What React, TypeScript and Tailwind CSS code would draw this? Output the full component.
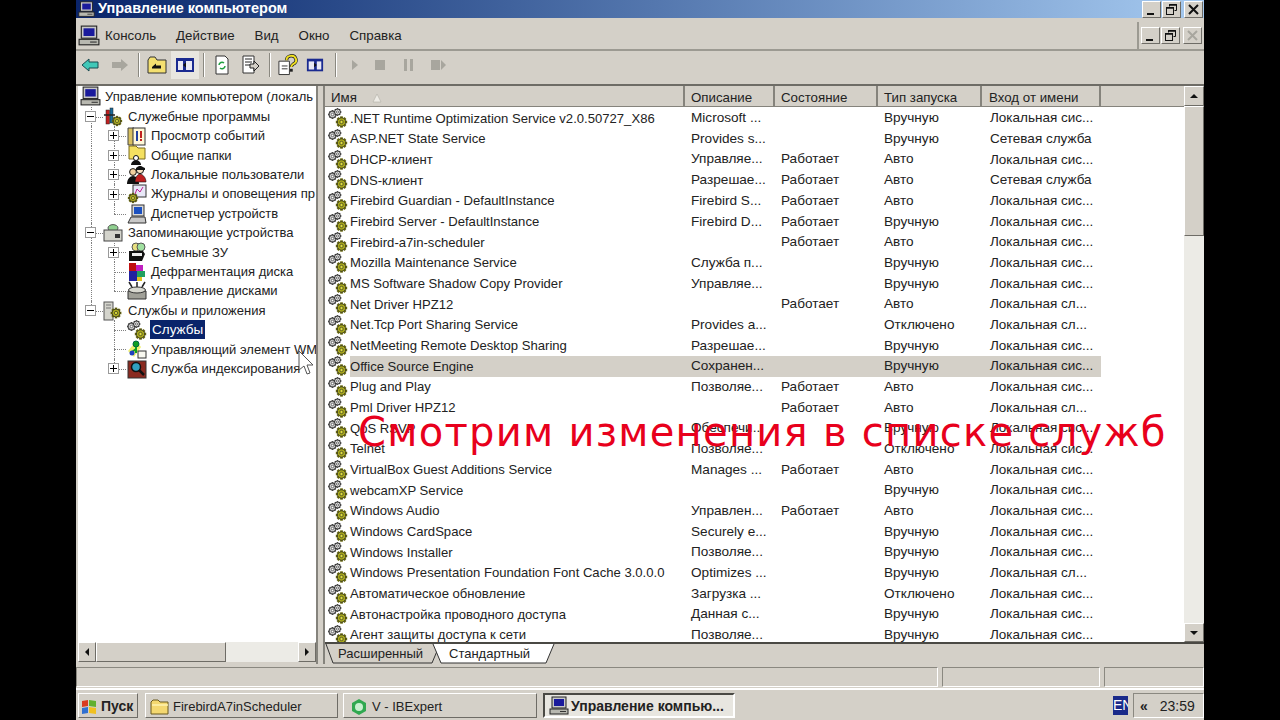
import React from "react";

const rows: [string, string, string, string, string][] = [
  [".NET Runtime Optimization Service v2.0.50727_X86", "Microsoft ...", "", "Вручную", "Локальная сис..."],
  ["ASP.NET State Service", "Provides s...", "", "Вручную", "Сетевая служба"],
  ["DHCP-клиент", "Управляе...", "Работает", "Авто", "Локальная сис..."],
  ["DNS-клиент", "Разрешае...", "Работает", "Авто", "Сетевая служба"],
  ["Firebird Guardian - DefaultInstance", "Firebird S...", "Работает", "Авто", "Локальная сис..."],
  ["Firebird Server - DefaultInstance", "Firebird D...", "Работает", "Вручную", "Локальная сис..."],
  ["Firebird-a7in-scheduler", "", "Работает", "Авто", "Локальная сис..."],
  ["Mozilla Maintenance Service", "Служба п...", "", "Вручную", "Локальная сис..."],
  ["MS Software Shadow Copy Provider", "Управляе...", "", "Вручную", "Локальная сис..."],
  ["Net Driver HPZ12", "", "Работает", "Авто", "Локальная сл..."],
  ["Net.Tcp Port Sharing Service", "Provides a...", "", "Отключено", "Локальная сл..."],
  ["NetMeeting Remote Desktop Sharing", "Разрешае...", "", "Вручную", "Локальная сис..."],
  ["Office Source Engine", "Сохранен...", "", "Вручную", "Локальная сис..."],
  ["Plug and Play", "Позволяе...", "Работает", "Авто", "Локальная сис..."],
  ["Pml Driver HPZ12", "", "Работает", "Авто", "Локальная сл..."],
  ["QoS RSVP", "Обеспечи...", "", "Вручную", "Локальная сис..."],
  ["Telnet", "Позволяе...", "", "Отключено", "Локальная сис..."],
  ["VirtualBox Guest Additions Service", "Manages ...", "Работает", "Авто", "Локальная сис..."],
  ["webcamXP Service", "", "", "Вручную", "Локальная сис..."],
  ["Windows Audio", "Управлен...", "Работает", "Авто", "Локальная сис..."],
  ["Windows CardSpace", "Securely e...", "", "Вручную", "Локальная сис..."],
  ["Windows Installer", "Позволяе...", "", "Вручную", "Локальная сис..."],
  ["Windows Presentation Foundation Font Cache 3.0.0.0", "Optimizes ...", "", "Вручную", "Локальная сл..."],
  ["Автоматическое обновление", "Загрузка ...", "", "Отключено", "Локальная сис..."],
  ["Автонастройка проводного доступа", "Данная с...", "", "Вручную", "Локальная сис..."],
  ["Агент защиты доступа к сети", "Позволяе...", "", "Вручную", "Локальная сис..."],
];

function GearShape({ cx, cy, r, fill, hole = "#fff", tooth = "#222" }: { cx: number; cy: number; r: number; fill: string; hole?: string; tooth?: string }) {
  const teeth = [0, 45, 90, 135];
  return (
    <g>
      {teeth.map((a) => (
        <rect
          key={a}
          x={cx - r * 1.35}
          y={cy - r * 0.32}
          width={r * 2.7}
          height={r * 0.64}
          fill={tooth}
          transform={`rotate(${a} ${cx} ${cy})`}
        />
      ))}
      <circle cx={cx} cy={cy} r={r} fill={fill} stroke="#222" strokeWidth="0.7" />
      <circle cx={cx} cy={cy} r={r * 0.4} fill={hole} stroke="#222" strokeWidth="0.6" />
    </g>
  );
}

const olive = { fill: "#a8a81c", hole: "#e0e040", tooth: "#66660c" };

function Gears({ size = 20 }: { size?: number }) {
  return (
    <svg width={size} height={size} viewBox="0 0 20 20" className="shrink-0">
      <GearShape cx={4.5} cy={6.5} r={3.2} fill="#dcdcdc" />
      <GearShape cx={9.5} cy={4} r={2.8} fill="#ececec" />
      <GearShape cx={13.5} cy={14} r={4.200} {...olive} />
    </svg>
  );
}

function Computer({ size = 20 }: { size?: number }) {
  return (
    <svg width={size} height={size} viewBox="0 0 20 20" className="shrink-0">
      <rect x="3" y="1" width="14" height="11" fill="#c8c8c8" stroke="#222" />
      <rect x="5" y="3" width="10" height="7" fill="#1a1a9c" />
      <rect x="1" y="13" width="18" height="5" fill="#b8b8b0" stroke="#222" />
      <rect x="11" y="15" width="6" height="1" fill="#333" />
    </svg>
  );
}

function Folder({ size = 20 }: { size?: number }) {
  return (
    <svg width={size} height={size} viewBox="0 0 20 20" className="shrink-0">
      <path d="M1 5l2-2h5l2 2h8v12H1z" fill="#f4d870" stroke="#6b5a20" />
      <path d="M2 8h16" stroke="#fff3b0" strokeWidth="1.5" />
    </svg>
  );
}

function TreeIcon({ kind }: { kind: string }) {
  if (kind === "tools")
    return (
      <svg width="20" height="20" viewBox="0 0 20 20" className="shrink-0">
        <rect x="3" y="3" width="3.500" height="14" fill="#c02020" stroke="#222" strokeWidth="0.5" />
        <rect x="7" y="1" width="3" height="15" fill="#1a6a9a" stroke="#222" strokeWidth="0.5" />
        <path d="M1 8h11" stroke="#222" strokeWidth="1.5" />
        <GearShape cx={14} cy={14} r={3.8} {...olive} />
      </svg>
    );
  if (kind === "events")
    return (
      <svg width="20" height="20" viewBox="0 0 20 20" className="shrink-0">
        <path d="M1 2h6v17H1z" fill="#d8c060" stroke="#444" />
        <rect x="6" y="2" width="12" height="17" fill="#fff8d8" stroke="#333" />
        <rect x="13" y="5" width="2" height="7" fill="#c02020" />
        <rect x="9" y="5" width="2" height="10" fill="#2040a0" />
        <rect x="13" y="13" width="2" height="2" fill="#c02020" />
      </svg>
    );
  if (kind === "shared")
    return (
      <svg width="20" height="20" viewBox="0 0 20 20" className="shrink-0">
        <path d="M2 1h7l2 2h7v11H2z" fill="#f4e060" stroke="#7a6a20" />
        <path d="M4 20c0-3 3-5 5-5s5 2 5 5z" fill="#111" />
        <circle cx="9" cy="13" r="2.500" fill="#fff" stroke="#111" />
      </svg>
    );
  if (kind === "users")
    return (
      <svg width="20" height="20" viewBox="0 0 20 20" className="shrink-0">
        <path d="M0 19c0-5 3-8 6-8s6 3 6 8z" fill="#111" />
        <circle cx="6" cy="7" r="3.400" fill="#f0d0a0" stroke="#111" />
        <path d="M8 17c0-5 3-8 5-8s6 3 6 8z" fill="#c02020" stroke="#111" strokeWidth="0.6" />
        <circle cx="13" cy="5" r="3.600" fill="#f6e0c0" stroke="#111" />
        <path d="M9 3l4-2 5 2v2h-9z" fill="#111" />
      </svg>
    );
  if (kind === "logs")
    return (
      <svg width="20" height="20" viewBox="0 0 20 20" className="shrink-0">
        <rect x="6" y="1" width="13" height="12" fill="#e8e8f8" stroke="#333" />
        <path d="M8 10l2-5 3 3 3-5" stroke="#c02090" fill="none" />
        <GearShape cx={6} cy={14} r={3.8} {...olive} />
      </svg>
    );
  if (kind === "device")
    return (
      <svg width="20" height="20" viewBox="0 0 20 20" className="shrink-0">
        <rect x="5" y="1" width="12" height="11" fill="#d8d8d8" stroke="#333" />
        <rect x="7" y="3" width="8" height="7" fill="#1a50c0" />
        <path d="M1 19l3-6h14l1 6z" fill="#c8c8c8" stroke="#333" />
      </svg>
    );
  if (kind === "storage")
    return (
      <svg width="20" height="20" viewBox="0 0 20 20" className="shrink-0">
        <ellipse cx="10" cy="5" rx="5" ry="3.400" fill="#90d090" stroke="#555" />
        <rect x="1" y="7" width="18" height="11" fill="#d4d4cc" stroke="#444" />
        <rect x="12" y="11" width="5" height="4" fill="#333" />
      </svg>
    );
  if (kind === "removable")
    return (
      <svg width="20" height="20" viewBox="0 0 20 20" className="shrink-0">
        <circle cx="9" cy="5" r="4" fill="#e8e080" stroke="#555" />
        <circle cx="14" cy="5" r="4" fill="#a0e0a0" stroke="#555" />
        <path d="M2 9h14l2 3-3 7H2z" fill="#111" />
        <rect x="5" y="11" width="10" height="3" fill="#f0f0f0" />
      </svg>
    );
  if (kind === "defrag")
    return (
      <svg width="20" height="20" viewBox="0 0 20 20" className="shrink-0">
        <path d="M2 1h7v8H2z" fill="#c01010" />
        <path d="M2 9h8v10H2z" fill="#2020a0" />
        <path d="M9 3h7v6H9z" fill="#c020c0" />
        <path d="M10 9h8v6h-8z" fill="#20a060" />
        <path d="M10 15h5v4h-5z" fill="#e0c020" />
      </svg>
    );
  if (kind === "disks")
    return (
      <svg width="20" height="20" viewBox="0 0 20 20" className="shrink-0">
        <path d="M2 1l3 5M10 1v5M18 1l-3 5" stroke="#222" strokeWidth="1.500" />
        <path d="M1 10h18v8H1z" fill="#a0a098" stroke="#333" />
        <ellipse cx="10" cy="9" rx="8.500" ry="3" fill="#d8d8d0" stroke="#333" />
      </svg>
    );
  if (kind === "apps")
    return (
      <svg width="20" height="20" viewBox="0 0 20 20" className="shrink-0">
        <rect x="1" y="1" width="9" height="18" fill="#d4d4cc" stroke="#555" />
        <path d="M3 4h5M3 7h5" stroke="#777" />
        <GearShape cx={13} cy={12} r={4} {...olive} />
      </svg>
    );
  if (kind === "wmi")
    return (
      <svg width="20" height="20" viewBox="0 0 20 20" className="shrink-0">
        <path d="M1 12l8-10 5 6-7 10z" fill="#f0f070" />
        <circle cx="9" cy="5" r="3" fill="#10a020" stroke="#064" />
        <path d="M9 8v6M5 13l4-3" stroke="#10a020" strokeWidth="2" />
        <circle cx="5" cy="14" r="2.500" fill="#2040c0" />
        <rect x="11" y="12" width="8" height="7" fill="#f8f8f0" stroke="#333" />
      </svg>
    );
  if (kind === "index")
    return (
      <svg width="20" height="20" viewBox="0 0 20 20" className="shrink-0">
        <rect x="1" y="2" width="18" height="17" fill="#8a2a20" stroke="#333" />
        <circle cx="9" cy="8" r="4.500" fill="#30a0c0" stroke="#111" strokeWidth="1.500" />
        <path d="M12 11l5 5" stroke="#111" strokeWidth="2.500" />
      </svg>
    );
  if (kind === "gears") return <Gears />;
  return <Computer />;
}

function Expander({ open }: { open: boolean }) {
  return (
    <span className="relative flex h-[11px] w-[11px] shrink-0 items-center justify-center border border-[#9a9a9a] bg-white">
      <span className="absolute h-px w-[7px] bg-black" />
      {!open && <span className="absolute h-[7px] w-px bg-black" />}
    </span>
  );
}

type TreeRow = { label: string; icon: string; level: number; exp?: "open" | "closed"; selected?: boolean; last?: boolean };

const tree: TreeRow[] = [
  { label: "Служебные программы", icon: "tools", level: 1, exp: "open" },
  { label: "Просмотр событий", icon: "events", level: 2, exp: "closed" },
  { label: "Общие папки", icon: "shared", level: 2, exp: "closed" },
  { label: "Локальные пользователи", icon: "users", level: 2, exp: "closed" },
  { label: "Журналы и оповещения пр", icon: "logs", level: 2, exp: "closed" },
  { label: "Диспетчер устройств", icon: "device", level: 2, last: true },
  { label: "Запоминающие устройства", icon: "storage", level: 1, exp: "open" },
  { label: "Съемные ЗУ", icon: "removable", level: 2, exp: "closed" },
  { label: "Дефрагментация диска", icon: "defrag", level: 2 },
  { label: "Управление дисками", icon: "disks", level: 2, last: true },
  { label: "Службы и приложения", icon: "apps", level: 1, exp: "open" },
  { label: "Службы", icon: "gears", level: 2, selected: true },
  { label: "Управляющий элемент WMI", icon: "wmi", level: 2 },
  { label: "Служба индексирования", icon: "index", level: 2, exp: "closed", last: true },
];

const raised = "border border-t-white border-l-white border-r-[#6e6c66] border-b-[#6e6c66]";
const sunken = "border border-t-[#8a8880] border-l-[#8a8880] border-r-white border-b-white";

function WinBtn({ kind, disabled }: { kind: "min" | "max" | "close"; disabled?: boolean }) {
  const c = disabled ? "#a8a69e" : "#111";
  return (
    <div className={`flex h-[17px] w-[19px] items-center justify-center bg-[#d4d0c8] ${raised}`}>
      <svg width="13" height="13" viewBox="0 0 13 13">
        {kind === "min" && <rect x="2" y="10" width="7" height="2" fill={c} />}
        {kind === "max" && (
          <g fill="none" stroke={c}>
            <path d="M4.500 3.500v-2h7v6h-2" />
            <rect x="1.500" y="4.500" width="7" height="7" />
            <path d="M1 5h8M4 2h8" strokeWidth="1.400" />
          </g>
        )}
        {kind === "close" && <path d="M2 2l9 9M11 2l-9 9" stroke={c} strokeWidth="2" />}
      </svg>
    </div>
  );
}

function ToolSep({ className }: { className: string }) {
  return <div className={`h-[24px] w-[2px] shrink-0 border-l border-r border-l-[#8a8880] border-r-white ${className}`} />;
}

function ScrollArrow({ dir }: { dir: "up" | "down" | "left" | "right" }) {
  const d = {
    up: "M2 8l4-4 4 4z",
    down: "M2 4l4 4 4-4z",
    left: "M8 2L4 6l4 4z",
    right: "M4 2l4 4-4 4z",
  }[dir];
  return (
    <svg width="12" height="12" viewBox="0 0 12 12">
      <path d={d} fill="#111" />
    </svg>
  );
}

function ToolbarIcons() {
  return (
    <div className="flex h-[28px] shrink-0 items-center pl-[5px]">
      <svg width="18" height="18" viewBox="0 0 18 18" className="shrink-0">
        <path d="M1 9l7-6v3h9v6H8v3z" fill="#40c8b8" stroke="#1a4a50" />
      </svg>
      <svg width="18" height="18" viewBox="0 0 18 18" className="ml-[12px] shrink-0">
        <path d="M17 9l-7-6v3H1v6h9v3z" fill="#a8a69e" />
      </svg>
      <ToolSep className="ml-[9px]" />
      <svg width="20" height="20" viewBox="0 0 20 20" className="ml-[7px] shrink-0">
        <path d="M1 5l2-3h5l2 3h9v13H1z" fill="#f4e070" stroke="#333" />
        <path d="M5 12l4-3.500v2h5v3H5z" fill="#111" />
      </svg>
      <div className="ml-[4px] flex h-[28px] w-[28px] shrink-0 items-center justify-center bg-[#e8e6e0]">
        <svg width="20" height="20" viewBox="0 0 20 20">
          <rect x="1" y="3" width="18" height="14" fill="#1a2a90" />
          <rect x="3" y="6" width="5" height="9" fill="#e8e8f4" />
          <rect x="11" y="6" width="6" height="9" fill="#e8e8f4" />
          <path d="M11 7.500l-3 2.500 3 2.500z" fill="#111" />
        </svg>
      </div>
      <ToolSep className="ml-[4px]" />
      <svg width="18" height="20" viewBox="0 0 18 20" className="ml-[8px] shrink-0">
        <path d="M3 1h9l3 3v15H3z" fill="#fff" stroke="#333" />
        <path d="M6 10a3 3 0 0 1 5-2M12 11a3 3 0 0 1-5 2" fill="none" stroke="#20a040" strokeWidth="1.500" />
      </svg>
      <svg width="18" height="20" viewBox="0 0 18 20" className="ml-[11px] shrink-0">
        <path d="M1 1h11v17H1z" fill="#fff" stroke="#333" />
        <path d="M3 4h7M3 7h7M3 10h7" stroke="#222" />
        <path d="M8 9h4V6l5 5-5 5v-3H8z" fill="#d4d0c8" stroke="#222" />
      </svg>
      <ToolSep className="ml-[9px]" />
      <svg width="21" height="22" viewBox="0 0 22 22" className="ml-[6px] shrink-0">
        <path d="M2 7h11v14H2z" fill="#fff" stroke="#333" />
        <path d="M5 12h6M5 15h6" stroke="#333" />
        <path d="M10 6a5 4.500 0 1 1 7 4c-1.500 1-2 1.500-2 3" fill="none" stroke="#222" strokeWidth="3.500" />
        <path d="M10 6a5 4.500 0 1 1 7 4c-1.500 1-2 1.500-2 3" fill="none" stroke="#f0e020" strokeWidth="2" />
        <rect x="13.500" y="15" width="3" height="3" fill="#222" />
      </svg>
      <svg width="18" height="18" viewBox="0 0 20 20" className="ml-[8px] shrink-0">
        <rect x="1" y="3" width="18" height="14" fill="#1a2a90" />
        <rect x="3" y="6" width="6" height="9" fill="#e8e8f4" />
        <rect x="12" y="6" width="5" height="9" fill="#e8e8f4" />
        <path d="M9 7.500l3 2.500-3 2.500z" fill="#111" />
      </svg>
      <ToolSep className="ml-[11px]" />
      <svg width="16" height="16" viewBox="0 0 16 16" className="ml-[11px] shrink-0">
        <path d="M4 3l6 5-6 5z" fill="#a8a69e" />
      </svg>
      <svg width="14" height="14" viewBox="0 0 14 14" className="ml-[9px] shrink-0">
        <rect x="2" y="2" width="10" height="10" fill="#a8a69e" />
      </svg>
      <svg width="12" height="14" viewBox="0 0 12 14" className="ml-[15px] shrink-0">
        <rect x="2" y="1" width="3" height="12" fill="#a8a69e" />
        <rect x="8" y="1" width="3" height="12" fill="#a8a69e" />
      </svg>
      <svg width="16" height="14" viewBox="0 0 16 14" className="ml-[16px] shrink-0">
        <rect x="1" y="2" width="9" height="10" fill="#a8a69e" />
        <path d="M11 2l5 5-5 5z" fill="#a8a69e" />
      </svg>
    </div>
  );
}

function HeaderCell({ w, children }: { w: string; children?: React.ReactNode }) {
  return (
    <div className={`flex h-full shrink-0 items-center whitespace-nowrap border-r-2 border-r-[#85837c] pl-[6px] pt-[3px] ${w}`}>{children}</div>
  );
}

export default function App() {
  return (
    <div className="flex h-[720px] w-[1280px] overflow-hidden bg-black font-['Liberation_Sans',sans-serif] text-[14px] text-[#222]">
      <div className="relative mx-[76px] flex w-[1128px] flex-col bg-[#d4d0c8]">
        <div className="flex h-[18px] shrink-0 items-center bg-gradient-to-r from-[#0a246a] to-[#a6caf0] pl-[2px] pr-[1px]">
          <Computer size={17} />
          <span className="ml-[3px] text-[14.5px] font-bold text-white">Управление компьютером</span>
          <div className="ml-auto flex items-center gap-[1px]">
            <WinBtn kind="min" />
            <WinBtn kind="max" />
            <div className="w-[1px]" />
            <WinBtn kind="close" />
          </div>
        </div>

        <div className="mt-[4px] flex h-[29px] shrink-0 items-center border-b-2 border-b-[#9c9a92] pl-[2px]">
          <Computer size={22} />
          <div className="ml-[5px] flex gap-[20px] pt-[1px] text-[13.3px]">
            <span>Консоль</span>
            <span>Действие</span>
            <span>Вид</span>
            <span>Окно</span>
            <span>Справка</span>
          </div>
          <div className="ml-auto flex h-full items-center gap-[1px] border-l-2 border-l-[#9c9a92] pl-[2px] pr-[2px]">
            <WinBtn kind="min" />
            <WinBtn kind="max" />
            <div className="w-[1px]" />
            <WinBtn kind="close" disabled />
          </div>
        </div>

        <ToolbarIcons />

        <div className="mt-[5px] flex min-h-0 flex-1 border-t-2 border-t-[#6e6c66]">
          <div className="flex w-[242px] shrink-0 flex-col border-r-2 border-r-[#85837c] pl-[2px]">
            <div className="h-[556px] shrink-0 overflow-hidden bg-white pt-[1px] text-[13px]">
              <div className="flex h-[19.8px] items-center whitespace-nowrap pl-[2px]">
                <Computer size={21} />
                <span className="ml-[4px]">Управление компьютером (локаль</span>
              </div>
              {tree.map((t, i) => (
                <div key={t.label} className="relative flex h-[19.42px] items-center whitespace-nowrap">
                  {i <= 10 && (
                    <div className={`absolute left-[13px] top-0 border-l border-dotted border-l-[#808080] ${i === 10 ? "h-1/2" : "h-full"}`} />
                  )}
                  {t.level === 2 && (
                    <div className={`absolute left-[36px] top-0 border-l border-dotted border-l-[#808080] ${t.last ? "h-1/2" : "h-full"}`} />
                  )}
                  {t.level === 1 ? (
                    <div className="absolute left-[13px] top-1/2 w-[12px] border-t border-dotted border-t-[#808080]" />
                  ) : (
                    <div className="absolute left-[36px] top-1/2 w-[12px] border-t border-dotted border-t-[#808080]" />
                  )}
                  <div className={`flex shrink-0 ${t.level === 1 ? "ml-[7px] mr-[7px] w-[11px]" : "ml-[30px] mr-[8px] w-[11px]"}`}>
                    {t.exp && <Expander open={t.exp === "open"} />}
                  </div>
                  <TreeIcon kind={t.icon} />
                  <span
                    className={
                      t.selected
                        ? "ml-[3px] flex h-[19px] items-center bg-[#0a246a] px-[2px] text-[13.5px] text-white"
                        : t.level === 1
                          ? "ml-[5px]"
                          : "ml-[4px]"
                    }
                  >
                    {t.label}
                  </span>
                </div>
              ))}
            </div>
            <div className="flex h-[20px] shrink-0 items-center">
              <div className={`flex h-full w-[18px] items-center justify-center ${raised}`}>
                <ScrollArrow dir="left" />
              </div>
              <div className={`h-full w-[130px] ${raised}`} />
              <div className="h-full flex-1 bg-[#ecebe6]" />
              <div className={`flex h-full w-[18px] items-center justify-center ${raised}`}>
                <ScrollArrow dir="right" />
              </div>
            </div>
          </div>

          <div className="ml-[5px] flex min-w-0 flex-1 flex-col border-l-2 border-l-[#85837c]">
            <div className="flex h-[558px] shrink-0 border-b-2 border-b-[#4a4944]">
              <div className="flex min-w-0 flex-1 flex-col">
                <div className="flex h-[21px] shrink-0 items-center border-b border-b-[#85837c] text-[13.3px]">
                  <HeaderCell w="w-[360px]">
                    <span>Имя</span>
                    <svg width="12" height="10" viewBox="0 0 12 10" className="ml-[14px]">
                      <path d="M6 1l4 8H2z" fill="#eeece6" stroke="#b0aea6" strokeWidth="0.6" />
                    </svg>
                  </HeaderCell>
                  <HeaderCell w="w-[90px]">Описание</HeaderCell>
                  <HeaderCell w="w-[103px]">Состояние</HeaderCell>
                  <HeaderCell w="w-[104px]">Тип запуска</HeaderCell>
                  <HeaderCell w="w-[119px]">
                    <span className="ml-[1px]">Вход от имени</span>
                  </HeaderCell>
                </div>
                <div className="min-h-0 flex-1 overflow-hidden bg-white pt-[1px]">
                  {rows.map((r) => (
                    <div key={r[0]} className="flex h-[20.68px] items-center whitespace-nowrap">
                      <div className="w-[25px] shrink-0 pl-[3px]">
                        <Gears />
                      </div>
                      <div className={`flex h-full w-[751px] shrink-0 items-center ${r[0] === "Office Source Engine" ? "bg-[#d4d0c8]" : ""}`}>
                        <span className="w-[335px] shrink-0 text-[13.1px]">{r[0]}</span>
                        <span className="w-[90px] shrink-0 pl-[6px] text-[13.6px]">{r[1]}</span>
                        <span className="w-[103px] shrink-0 pl-[6px] text-[13.6px]">{r[2]}</span>
                        <span className="w-[104px] shrink-0 pl-[6px] text-[13.6px]">{r[3]}</span>
                        <span className="w-[119px] shrink-0 pl-[8px] text-[13.5px]">{r[4]}</span>
                      </div>
                    </div>
                  ))}
                </div>
              </div>
              <div className="flex w-[20px] shrink-0 flex-col bg-[#ecebe6]">
                <div className={`flex h-[20px] shrink-0 items-center justify-center bg-[#d4d0c8] ${raised}`}>
                  <ScrollArrow dir="up" />
                </div>
                <div className={`h-[130px] shrink-0 bg-[#d4d0c8] ${raised}`} />
                <div className="flex-1" />
                <div className={`flex h-[19px] shrink-0 items-center justify-center bg-[#d4d0c8] ${raised}`}>
                  <ScrollArrow dir="down" />
                </div>
              </div>
            </div>
            <div className="relative flex h-[20px] w-[232px] shrink-0 items-center text-[13px]">
              <svg width="232" height="20" viewBox="0 0 232 20" className="absolute left-0 top-0">
                <path d="M1 0l7 19h99l8-19" fill="#d4d0c8" stroke="#333" />
                <path d="M108 0l8 19h105l8-19z" fill="#fff" />
                <path d="M108 0l8 19h105l8-19" fill="none" stroke="#333" />
              </svg>
              <span className="relative ml-[13px] w-[111px] whitespace-nowrap">Расширенный</span>
              <span className="relative whitespace-nowrap">Стандартный</span>
            </div>
          </div>
        </div>

        <div className="flex h-[26px] shrink-0 items-start gap-[4px] border-b-2 border-b-white pt-[3px]">
          <div className={`h-[20px] flex-1 ${sunken}`} />
          <div className={`h-[20px] w-[158px] ${sunken}`} />
          <div className={`h-[20px] w-[100px] ${sunken}`} />
        </div>

        <div className="flex h-[30px] shrink-0 items-center pt-[1px] text-[13px]">
          <div className={`ml-[2px] flex h-[25px] w-[60px] shrink-0 items-center gap-[3px] pl-[1px] pt-[2px] text-[14px] font-bold ${raised}`}>
            <svg width="18" height="18" viewBox="0 0 18 18">
              <path d="M2 3l6-1v6l-6 1z" fill="#d83a20" />
              <path d="M9 2l7 1v6l-7-1z" fill="#60b030" />
              <path d="M2 10l6-1v6l-6 1z" fill="#3070d0" />
              <path d="M9 9l7 1v6l-7-1z" fill="#f0c020" />
            </svg>
            Пуск
          </div>
          <div className={`ml-[7px] flex h-[25px] w-[193px] shrink-0 items-center gap-[3px] whitespace-nowrap pl-[4px] pt-[2px] ${raised}`}>
            <Folder size={20} />
            FirebirdA7inScheduler
          </div>
          <div className={`ml-[5px] flex h-[25px] w-[194px] shrink-0 items-center gap-[4px] whitespace-nowrap pl-[6px] pt-[2px] ${raised}`}>
            <svg width="18" height="18" viewBox="0 0 18 18">
              <path d="M9 1l7 4v8l-7 4-7-4V5z" fill="#30a850" />
              <circle cx="9" cy="9" r="4" fill="#c8f0d0" />
            </svg>
            <span>V - IBExpert</span>
          </div>
          <div className="ml-[6px] flex h-[25px] w-[192px] shrink-0 items-center gap-[2px] whitespace-nowrap border-2 border-t-[#4a4944] border-l-[#4a4944] border-r-white border-b-white bg-[#e8e6e0] pl-[4px] pt-[1px] text-[14px] font-bold">
            <Computer size={20} />
            Управление компью...
          </div>
          <div className="ml-auto flex items-center">
            <div className="flex h-[19px] w-[15px] items-center overflow-hidden bg-[#1a2a8a] text-[14px] text-white">EN</div>
            <div className={`ml-[5px] flex h-[25px] w-[71px] items-center pl-[6px] pt-[1px] text-[14px] ${sunken}`}>
              <span className="font-bold">«</span>
              <span className="ml-[12px]">23:59</span>
            </div>
          </div>
        </div>

        <svg width="16" height="26" viewBox="0 0 16 26" className="absolute left-[222px] top-[350px]">
          <path d="M1 1v19l5-4 3 8 3-1-3-8h6z" fill="#ffffff" fillOpacity="0.75" stroke="#555" />
        </svg>

        <div className="absolute left-[282px] top-[405px] whitespace-nowrap font-['DejaVu_Sans',sans-serif] text-[40px] leading-[54px] tracking-[1.28px] text-[#e8001c]">
          Смотрим изменения в списке служб
        </div>
      </div>
    </div>
  );
}
